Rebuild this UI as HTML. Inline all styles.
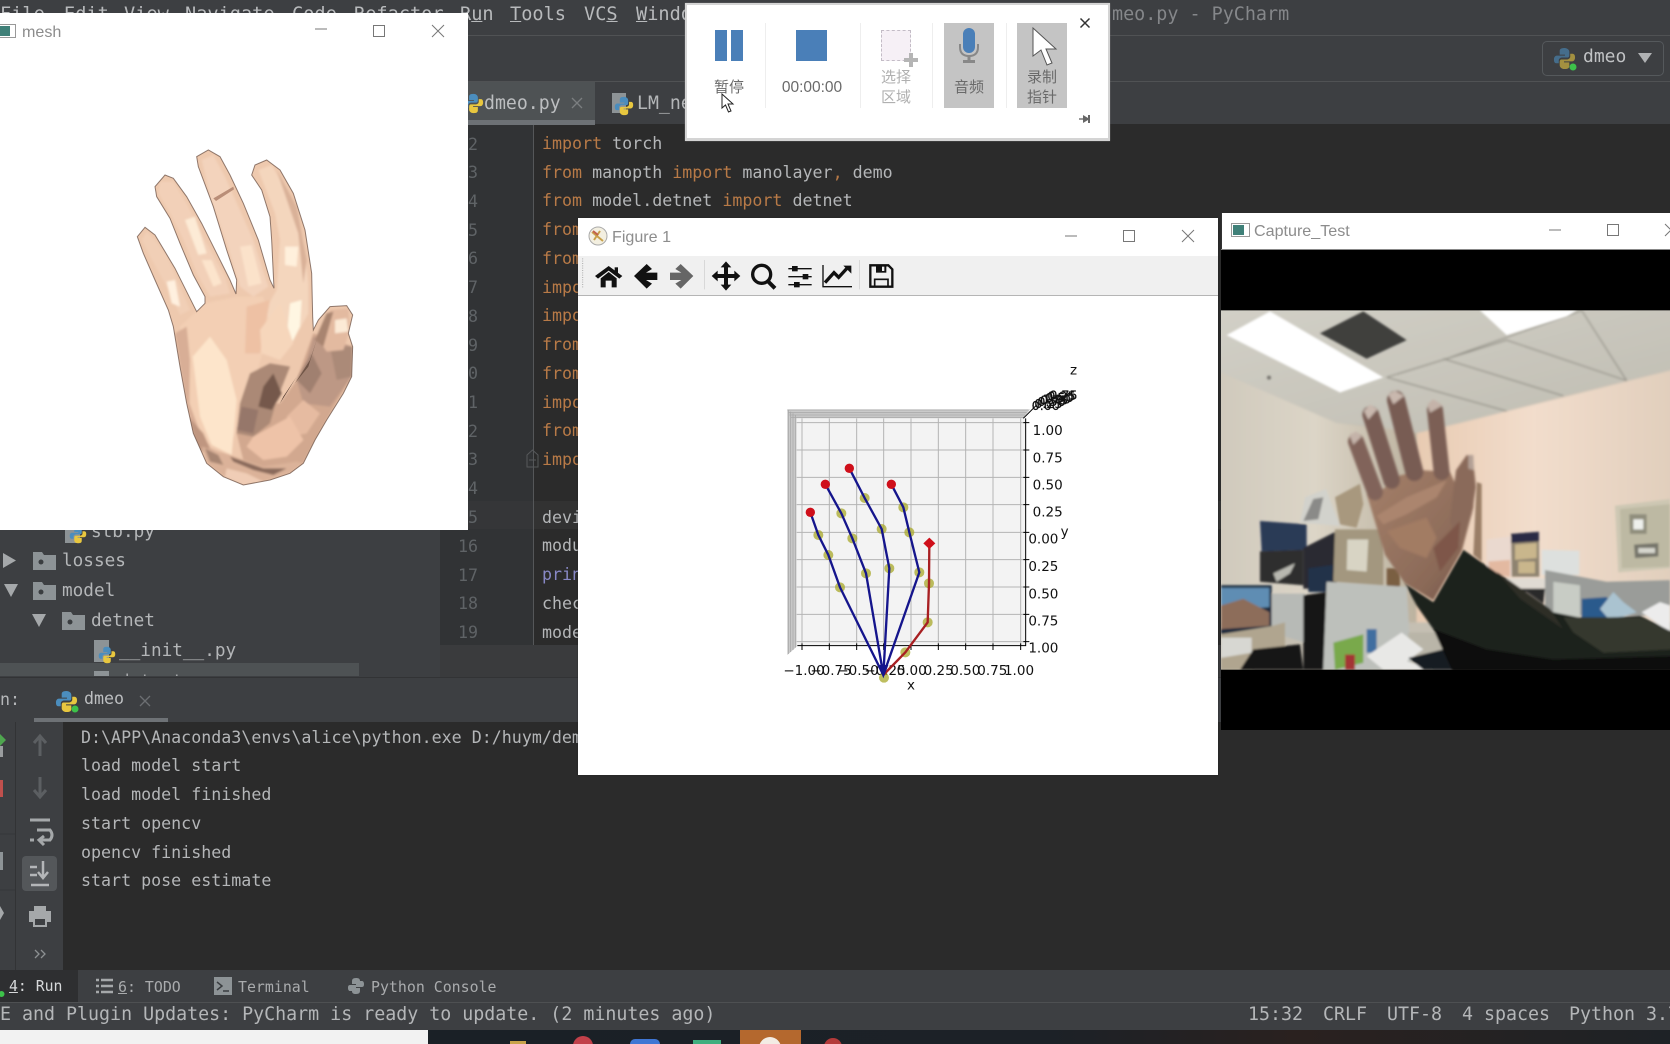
<!DOCTYPE html>
<html>
<head>
<meta charset="utf-8">
<title>dmeo.py - PyCharm</title>
<style>
html,body{margin:0;padding:0}
html{background:#3d3f42}
body{width:1670px;height:1044px;position:relative;overflow:hidden;background:#3d3f42;font-family:"DejaVu Sans Mono","Liberation Mono",monospace;filter:blur(.3px)}
.a{position:absolute}
.t{position:absolute;white-space:pre;font-family:"DejaVu Sans Mono","Liberation Mono",monospace;line-height:20px;font-size:16.65px;color:#b4b6b8;margin-top:1px}
.k{color:#b87a47}
.u{text-decoration:underline}
.w{position:absolute;background:#fff;overflow:hidden}
.wt{position:absolute;white-space:pre;font-family:"Liberation Sans","DejaVu Sans",sans-serif;font-size:16.1px;line-height:20px;color:#8c8c8c;margin-top:1px}
.cn{position:absolute;white-space:pre;font-family:"Liberation Sans","Noto Sans CJK SC",sans-serif;font-size:15px;line-height:20px;text-align:center;color:#6a6a6a;margin-top:1px}
.m{font-size:18.6px;color:#b8babc;top:4px}
.s{font-size:18.3px;top:1004px;color:#b4b6b8}
.n{left:468px;color:#5f6366}
svg{position:absolute;overflow:visible}
</style>
</head>
<body>
<svg width="0" height="0" style="position:absolute">
<defs>
<symbol id="py" viewBox="0 0 24 24">
<path fill="#4b8dbd" d="M12 1C7 1 7 3 7 5V8H12.500V9H4C2 9 1 11 1 13C1 16 2 17 4 17H6V14C6 12 8 11 10 11H15C16.500 11 17 10 17 8V5C17 3 15 1 12 1Z"/>
<path fill="#e8c73f" d="M12 23C17 23 17 21 17 19V16H11.500V15H20C22 15 23 13 23 11C23 8 22 7 20 7H18V10C18 12 16 13 14 13H9C7.500 13 7 14 7 16V19C7 21 9 23 12 23Z"/>
</symbol>
<filter id="b1" x="-5%" y="-5%" width="110%" height="110%"><feGaussianBlur stdDeviation="3.5"/></filter>
<filter id="b0" x="-5%" y="-5%" width="110%" height="110%"><feGaussianBlur stdDeviation=".8"/></filter>
<filter id="b2" x="-5%" y="-5%" width="110%" height="110%"><feGaussianBlur stdDeviation="4"/></filter>
<filter id="b3" x="-5%" y="-5%" width="110%" height="110%"><feGaussianBlur stdDeviation="3"/></filter>
</defs>
</svg>

<!-- title / menu -->
<div class="a" style="left:0;top:35px;width:1670px;height:1px;background:#505254"></div>
<div class="a" style="left:0;top:81px;width:1670px;height:1px;background:#505254"></div>
<div class="t m" style="left:0">File</div>
<div class="t m" style="left:64px">Edit</div>
<div class="t m" style="left:124px">View</div>
<div class="t m" style="left:185px">Navigate</div>
<div class="t m" style="left:292px">Code</div>
<div class="t m" style="left:354px">Refactor</div>
<div class="t m" style="left:460px">R<span class="u">u</span>n</div>
<div class="t m" style="left:510px"><span class="u">T</span>ools</div>
<div class="t m" style="left:584px">VC<span class="u">S</span></div>
<div class="t m" style="left:636px"><span class="u">W</span>indow</div>
<div class="t" style="left:1112px;top:4px;font-size:18.4px;color:#85878a">meo.py - PyCharm</div>

<!-- run config -->
<div class="a" style="left:1542px;top:41px;width:120px;height:33px;border:1.5px solid #55595c;border-radius:5px"></div>
<svg style="left:1553px;top:47px" width="23" height="23"><use href="#py" width="23" height="23" opacity=".6"/><circle cx="20" cy="20" r="3.500" fill="#3dc24a"/></svg>
<div class="t" style="left:1583px;top:46px;font-size:18px;color:#c0c2c4">dmeo</div>
<svg style="left:1638px;top:53px" width="14" height="10"><path d="M0 0H14L7 10Z" fill="#b0b2b4"/></svg>

<!-- editor -->
<div class="a" style="left:440px;top:124px;width:94px;height:521px;background:#313335"></div>
<div class="a" style="left:534px;top:124px;width:1136px;height:521px;background:#2b2b2b"></div>
<div class="a" style="left:533px;top:124px;width:1px;height:521px;background:#555759"></div>
<div class="a" style="left:440px;top:645px;width:1230px;height:33px;background:#3a3b3d"></div>
<div class="a" style="left:534px;top:501px;width:1136px;height:28px;background:#323232"></div>
<div class="a" style="left:440px;top:501px;width:93px;height:28px;background:#353638"></div>

<!-- tabs -->
<div class="a" style="left:440px;top:82px;width:155px;height:43px;background:#4e5254"></div>
<div class="a" style="left:440px;top:120px;width:155px;height:5px;background:#6d7175"></div>
<svg style="left:463px;top:93px" width="21" height="21"><use href="#py" width="21" height="21"/></svg>
<div class="t" style="left:484px;top:93px;font-size:18.2px;color:#bcbec0">dmeo.py</div>
<svg style="left:571px;top:97px" width="12" height="12"><path d="M1 1L11 11M11 1L1 11" stroke="#7b7e80" stroke-width="1.300"/></svg>
<div class="a" style="left:612px;top:93px;width:14px;height:20px;background:#8d9396"></div>
<svg style="left:614px;top:96px" width="20" height="20"><use href="#py" width="20" height="20"/></svg>
<div class="t" style="left:637px;top:93px;font-size:18.2px;color:#b4b6b8">LM_net.py</div>

<!-- line numbers -->
<div class="t n" style="top:134px">2</div>
<div class="t n" style="top:162px">3</div>
<div class="t n" style="top:191px">4</div>
<div class="t n" style="top:220px">5</div>
<div class="t n" style="top:248px">6</div>
<div class="t n" style="top:277px">7</div>
<div class="t n" style="top:306px">8</div>
<div class="t n" style="top:335px">9</div>
<div class="t n" style="top:363px">0</div>
<div class="t n" style="top:392px">1</div>
<div class="t n" style="top:421px">2</div>
<div class="t n" style="top:449px">3</div>
<div class="t n" style="top:478px">4</div>
<div class="t n" style="top:507px">5</div>
<div class="t n" style="left:458px;top:536px">16</div>
<div class="t n" style="left:458px;top:565px">17</div>
<div class="t n" style="left:458px;top:593px">18</div>
<div class="t n" style="left:458px;top:622px">19</div>
<svg style="left:525px;top:449px" width="15" height="20"><path d="M2 6L7.500 1L13 6V18H2Z" fill="none" stroke="#56585a"/><path d="M4 11H11" stroke="#56585a"/></svg>

<!-- code -->
<div class="t" style="left:542px;top:133px"><span class="k">import</span> torch</div>
<div class="t" style="left:542px;top:162px"><span class="k">from</span> manopth <span class="k">import</span> manolayer<span class="k">,</span> demo</div>
<div class="t" style="left:542px;top:190px"><span class="k">from</span> model.detnet <span class="k">import</span> detnet</div>
<div class="t" style="left:542px;top:219px"><span class="k">from</span></div>
<div class="t" style="left:542px;top:248px"><span class="k">from</span></div>
<div class="t" style="left:542px;top:277px"><span class="k">import</span></div>
<div class="t" style="left:542px;top:305px"><span class="k">import</span></div>
<div class="t" style="left:542px;top:334px"><span class="k">from</span></div>
<div class="t" style="left:542px;top:363px"><span class="k">from</span></div>
<div class="t" style="left:542px;top:392px"><span class="k">import</span></div>
<div class="t" style="left:542px;top:420px"><span class="k">from</span></div>
<div class="t" style="left:542px;top:449px"><span class="k">import</span></div>
<div class="t" style="left:542px;top:507px">device</div>
<div class="t" style="left:542px;top:535px">module</div>
<div class="t" style="left:542px;top:564px;color:#8888c6">print</div>
<div class="t" style="left:542px;top:593px">checkpoint</div>
<div class="t" style="left:542px;top:622px">model</div>

<!-- project tree -->
<div class="a" style="left:0;top:663px;width:359px;height:13px;background:#4e5254"></div>
<svg style="left:65px;top:520px" width="23" height="25"><rect x="0" y="2" width="15" height="21" fill="#8d9396"/><use href="#py" x="4" y="6" width="18" height="18"/></svg>
<div class="t" style="left:91px;top:521px;font-size:17.7px;color:#b4b6b8">stb.py</div>
<svg style="left:3px;top:553px" width="13" height="15"><path d="M0 0L13 7.500L0 15Z" fill="#a5a8aa"/></svg>
<svg style="left:33px;top:552px" width="23" height="18"><path d="M0 0H9L11 3H23V18H0Z" fill="#8d9396"/><circle cx="8" cy="10" r="2.500" fill="#3a3d40"/></svg>
<div class="t" style="left:62px;top:550px;font-size:17.7px;color:#b4b6b8">losses</div>
<svg style="left:4px;top:584px" width="14" height="13"><path d="M0 0H14L7 13Z" fill="#a5a8aa"/></svg>
<svg style="left:33px;top:582px" width="23" height="18"><path d="M0 0H9L11 3H23V18H0Z" fill="#8d9396"/><circle cx="8" cy="10" r="2.500" fill="#3a3d40"/></svg>
<div class="t" style="left:62px;top:580px;font-size:17.7px;color:#b4b6b8">model</div>
<svg style="left:32px;top:614px" width="14" height="13"><path d="M0 0H14L7 13Z" fill="#a5a8aa"/></svg>
<svg style="left:62px;top:612px" width="23" height="18"><path d="M0 0H9L11 3H23V18H0Z" fill="#8d9396"/><circle cx="8" cy="10" r="2.500" fill="#3a3d40"/></svg>
<div class="t" style="left:91px;top:610px;font-size:17.7px;color:#b4b6b8">detnet</div>
<svg style="left:94px;top:640px" width="23" height="25"><rect x="0" y="0" width="15" height="22" fill="#8d9396"/><use href="#py" x="4" y="6" width="18" height="18"/></svg>
<div class="t" style="left:119px;top:640px;font-size:17.7px;color:#b4b6b8">__init__.py</div>
<div class="a" style="left:0;top:664px;width:440px;height:12px;overflow:hidden">
<div class="a" style="left:94px;top:7px;width:15px;height:12px;background:#8d9396"></div>
<div class="t" style="left:119px;top:7px;font-size:17.7px;color:#a5a7a9">detnet.py</div>
</div>

<!-- run tool window -->
<div class="a" style="left:0;top:677px;width:1670px;height:1px;background:#323335"></div>
<div class="a" style="left:34px;top:718px;width:134px;height:4px;background:#6e7276"></div>
<div class="t" style="left:0;top:689px">n:</div>
<svg style="left:55px;top:690px" width="24" height="23"><use href="#py" width="23" height="23"/><circle cx="20" cy="19" r="3.500" fill="#3dc24a"/></svg>
<div class="t" style="left:84px;top:688px;color:#bcbec0">dmeo</div>
<svg style="left:139px;top:695px" width="12" height="12"><path d="M1 1L11 11M11 1L1 11" stroke="#6c6f72" stroke-width="1.300"/></svg>

<div class="a" style="left:63px;top:722px;width:1607px;height:248px;background:#2b2b2b"></div>
<div class="a" style="left:15px;top:722px;width:1px;height:248px;background:#323335"></div>
<div class="t" style="left:81px;top:727px">D:\APP\Anaconda3\envs\alice\python.exe D:/huym/demo/dmeo.py</div>
<div class="t" style="left:81px;top:755px">load model start</div>
<div class="t" style="left:81px;top:784px">load model finished</div>
<div class="t" style="left:81px;top:813px">start opencv</div>
<div class="t" style="left:81px;top:842px">opencv finished</div>
<div class="t" style="left:81px;top:870px">start pose estimate</div>

<!-- run side icons -->
<svg style="left:0;top:722px" width="63" height="248">
<path d="M0 12L6 18L0 24Z" fill="#4fa64f"/><rect x="0" y="24" width="3" height="11" fill="#9a9d9f"/>
<rect x="0" y="58" width="3" height="17" fill="#c0504d"/>
<path d="M0 112H15M0 168H15" stroke="#35373a"/>
<rect x="0" y="130" width="3" height="18" fill="#8d9396"/>
<path d="M0 184L4 191L0 198Z" fill="#a5a8aa"/>
<path d="M40 15V34M34 21L40 14L46 21" fill="none" stroke="#5c5f62" stroke-width="3"/>
<path d="M40 55V74M34 68L40 75L46 68" fill="none" stroke="#5c5f62" stroke-width="3"/>
<path d="M30 98H50M37 108H50Q54 113 50 118H40M44 114L39 118L44 123M30 118H34" fill="none" stroke="#a5a8aa" stroke-width="3"/>
<rect x="22" y="134" width="35" height="35" rx="4" fill="#54575a"/>
<path d="M30 145H37M30 153H37M31 163H49M43 139V154M38 150L43 156L48 150" fill="none" stroke="#b4b6b8" stroke-width="2.500"/>
<path d="M34 189V184H46V189M29 189H51V200H46V195H34V200H29Z" fill="#a5a8aa"/><rect x="34" y="196" width="12" height="8" fill="none" stroke="#a5a8aa" stroke-width="2"/>
<path d="M35 228L39 232L35 236M41 228L45 232L41 236" fill="none" stroke="#8d9092" stroke-width="1.300"/>
</svg>

<!-- bottom tabs -->
<div class="a" style="left:0;top:970px;width:1670px;height:32px;background:#3d3f42"></div>
<div class="a" style="left:0;top:970px;width:78px;height:32px;background:#2e2f31"></div>
<svg style="left:0;top:990px" width="8" height="8"><circle cx="1.500" cy="4" r="3" fill="#3dc24a"/></svg>
<div class="t" style="left:9px;top:976px;font-size:14.8px;color:#d6d8da"><span class="u">4</span>: Run</div>
<svg style="left:96px;top:978px" width="17" height="16"><path d="M0 2H3M5 2H17M0 8H3M5 8H17M0 14H3M5 14H17" stroke="#a5a8aa" stroke-width="2.500"/></svg>
<div class="t" style="left:118px;top:976px;font-size:14.9px;color:#a9abad"><span class="u">6</span>: TODO</div>
<svg style="left:214px;top:977px" width="18" height="18"><rect width="18" height="18" fill="#8d9396"/><path d="M3 5L8 9L3 13M9 14H15" fill="none" stroke="#3a3d40" stroke-width="1.500"/></svg>
<div class="t" style="left:238px;top:976px;font-size:14.9px;color:#a9abad">Terminal</div>
<svg style="left:347px;top:977px" width="18" height="18"><path d="M9 1C5 1 5 3 5 5V7H9V8H3C1 8 1 10 1 11C1 13 2 14 3 14H5C5 11 7 10 9 10H12C13 10 13 9 13 7V4C13 2 12 1 9 1Z" fill="#8d9396"/><path d="M9 17C13 17 13 15 13 13V11H9V10H15C17 10 17 8 17 7C17 5 16 4 15 4H13C13 7 11 8 9 8H6C5 8 5 9 5 11V14C5 16 6 17 9 17Z" fill="#8d9396"/></svg>
<div class="t" style="left:371px;top:976px;font-size:14.9px;color:#a9abad">Python Console</div>

<!-- status bar -->
<div class="a" style="left:0;top:1002px;width:1670px;height:28px;background:#3d3f42;border-top:1px solid #4e5052;box-sizing:border-box"></div>
<div class="t s" style="left:0">E and Plugin Updates: PyCharm is ready to update. (2 minutes ago)</div>
<div class="t s" style="left:1248px">15:32</div>
<div class="t s" style="left:1323px">CRLF</div>
<div class="t s" style="left:1387px">UTF-8</div>
<div class="t s" style="left:1462px">4 spaces</div>
<div class="t s" style="left:1569px">Python 3.7</div>

<!-- taskbar -->
<div class="a" style="left:0;top:1030px;width:428px;height:14px;background:#f2f2f2"></div>
<div class="a" style="left:428px;top:1030px;width:1242px;height:14px;background:linear-gradient(90deg,#1a2026,#1c2127 50%,#2a211f 70%,#1e2226)"></div>
<div class="a" style="left:740px;top:1030px;width:61px;height:14px;background:#b4682e"></div>
<svg style="left:428px;top:1030px;overflow:hidden" width="500" height="14">
<rect x="82" y="11" width="16" height="3" fill="#c9a34a"/>
<circle cx="155" cy="16" r="10" fill="#c2404a"/>
<rect x="202" y="9" width="30" height="12" rx="5" fill="#3f76d4"/>
<rect x="265" y="10" width="28" height="6" fill="#3fae7e"/>
<circle cx="342" cy="18" r="11" fill="#f3ece4"/>
<circle cx="405" cy="17" r="9" fill="#b33a3a"/>
</svg>

<!-- mesh window -->
<div class="w" style="left:0;top:13px;width:468px;height:517px">
<svg style="left:-3px;top:11px" width="19" height="14"><rect x=".5" y=".5" width="18" height="13" fill="#fff" stroke="#999"/><rect x="2" y="2" width="11" height="10" fill="#3f8078"/></svg>
<div class="wt" style="left:22px;top:8px">mesh</div>
<svg style="left:0;top:0" width="468" height="40"><path d="M315 16H327" stroke="#777"/><rect x="373.500" y="12.500" width="11" height="11" fill="none" stroke="#777"/><path d="M432 12L444 24M444 12L432 24" stroke="#777"/></svg>
<svg style="left:130px;top:127px" width="240" height="360" viewBox="0 0 720 1080">
<defs><clipPath id="hc"><path d="M45 262L75 285L105 335L135 385L165 445L200 515L225 490L225 470L190 405L150 310L120 235L80 170L75 140L105 105L130 115L170 170L215 250L260 340L300 420L318 462L320 420L290 330L250 200L205 80L200 50L235 30L270 50L300 105L340 190L385 300L420 420L432 445L425 300L420 230L395 150L365 105L375 75L410 60L450 90L490 160L525 270L545 400L548 530L550 570L565 540L600 500L650 497L668 525L655 580L668 620L665 710L640 760L590 840L555 900L520 970L480 1000L420 1020L340 1035L280 1010L230 970L190 880L170 790L150 680L130 560L115 510L75 420L40 340L22 290Z"/></clipPath></defs>
<g clip-path="url(#hc)">
<rect width="720" height="1080" fill="#eec9ae"/>
<g filter="url(#b1)">
<path d="M50 275L75 300L110 345L150 440L180 510L150 525L110 440L60 350L35 300Z" fill="#f1cfb6"/>
<path d="M110 425L135 420L150 500L125 490Z" fill="#fff0df"/>
<path d="M90 125L130 125L170 190L225 300L285 410L300 460L240 470L200 400L160 300L120 220L85 160Z" fill="#f2d0b8"/>
<path d="M165 240L195 230L230 340L205 345Z" fill="#fdebd6"/>
<path d="M215 360L245 360L275 430L250 440Z" fill="#fce4cc"/>
<path d="M215 60L250 45L285 110L370 300L415 440L370 470L330 440L290 310L240 170Z" fill="#f3d3bc"/>
<path d="M330 320L365 315L395 430L355 440Z" fill="#fbe2ca"/>
<path d="M385 90L425 75L480 170L520 300L535 430L535 520L480 620L430 620L400 520L440 450L450 300L435 220Z" fill="#f4d6bd"/>
<path d="M465 320L505 320L500 380L465 375Z" fill="#fff0dc"/>
<path d="M480 490L515 480L510 560L480 620L470 590Z" fill="#fff6e2"/>
<path d="M440 90L500 200L530 360L520 430L505 280Z" fill="#d9b198"/>
<path d="M150 560L225 490L320 470L400 470L420 560L380 700L320 870L290 940L220 900L175 780Z" fill="#f3cfb4"/>
<path d="M188 650L240 590L290 660L320 780L305 945L245 915L210 830Z" fill="#fde5cb"/>
<path d="M350 500L420 480L390 640L345 640Z" fill="#eec1a4"/>
<path d="M390 570L450 490L490 610L450 660L395 640Z" fill="#f6d6bb"/>
<path d="M135 580L170 560L180 660L178 790L215 890L190 880L165 770Z" fill="#d8ae96"/>
<path d="M175 830L220 880L240 925L300 950L240 955L200 920Z" fill="#bf9680"/>
<path d="M330 790L450 790L500 720L550 580L668 620L665 710L590 840L520 970L420 1000L340 960L320 880Z" fill="#d2a88f"/>
<path d="M360 700L420 670L480 680L440 780L420 850L370 890L320 880L330 790Z" fill="#ab8976"/>
<path d="M400 740L430 700L455 760L425 810L385 800Z" fill="#75594b"/>
<path d="M335 800L385 810L370 880L320 870Z" fill="#96776a"/>
<path d="M550 590L668 620L665 710L600 800L520 790L500 720L530 660Z" fill="#bd9885"/>
<path d="M470 830L520 780L570 820L530 880L480 890Z" fill="#e6bba1"/>
<path d="M500 720L545 640L575 700L540 760Z" fill="#a08070"/>
<path d="M600 620L668 620L665 710L620 720Z" fill="#ab8a78"/>
<path d="M370 890L480 830L520 900L470 950L400 960L350 920Z" fill="#eec3a8"/>
<path d="M560 590L600 510L655 505L660 570L640 630L590 635Z" fill="#e3baa0"/>
<path d="M615 540L650 535L655 575L615 580Z" fill="#fcead6"/>
<path d="M555 600L590 520L610 515L580 620Z" fill="#a8846f"/>
<path d="M215 920L300 945L400 980L500 965L520 970L480 1000L420 1020L340 1035L280 1010L230 970Z" fill="#dbb299"/>
<path d="M225 925L265 945L280 975L240 965Z" fill="#a78572"/>
<path d="M300 950L400 985L470 985L430 1005L370 990L310 965Z" fill="#8a6b5b"/>
<path d="M290 985L350 1000L400 1025L340 1035L285 1010Z" fill="#f0cdb6"/>
</g>
<g filter="url(#b0)">
<path d="M250 175L310 140L312 148L258 183Z" fill="#b98e78"/>
<path d="M460 770L520 680L540 650L500 710L450 790Z" fill="#4b352c"/>
<path d="M495 730L540 660L560 600L535 680Z" fill="#6f5546"/>
</g>
</g>
<path filter="url(#b0)" d="M45 262L75 285L105 335L135 385L165 445L200 515L225 490L225 470L190 405L150 310L120 235L80 170L75 140L105 105L130 115L170 170L215 250L260 340L300 420L318 462L320 420L290 330L250 200L205 80L200 50L235 30L270 50L300 105L340 190L385 300L420 420L432 445L425 300L420 230L395 150L365 105L375 75L410 60L450 90L490 160L525 270L545 400L548 530L550 570L565 540L600 500L650 497L668 525L655 580L668 620L665 710L640 760L590 840L555 900L520 970L480 1000L420 1020L340 1035L280 1010L230 970L190 880L170 790L150 680L130 560L115 510L75 420L40 340L22 290Z" fill="none" stroke="#6d5346" stroke-width="3" stroke-opacity=".75"/>
</svg>
</div>

<!-- recorder panel -->
<div class="a" style="left:685px;top:3px;width:421px;height:133px;background:#fff;border:2px solid #d4d4d4;border-bottom-width:3px;box-shadow:0 0 1px #888"></div>
<div class="a" style="left:765px;top:23px;width:1px;height:85px;background:#eee"></div>
<div class="a" style="left:860px;top:23px;width:1px;height:85px;background:#eee"></div>
<div class="a" style="left:932px;top:23px;width:1px;height:85px;background:#eee"></div>
<div class="a" style="left:1006px;top:23px;width:1px;height:85px;background:#eee"></div>
<div class="a" style="left:715px;top:30px;width:12px;height:31px;background:#4a7fb8"></div>
<div class="a" style="left:731px;top:30px;width:12px;height:31px;background:#4a7fb8"></div>
<div class="a" style="left:796px;top:30px;width:31px;height:31px;background:#4a7fb8"></div>
<div class="cn" style="left:699px;top:77px;width:60px">暂停</div>
<div class="cn" style="left:772px;top:77px;width:80px;font-size:15.5px">00:00:00</div>
<div class="a" style="left:881px;top:30px;width:30px;height:31px;background:#f6f0f6;border:1px dashed #c3bcc6;box-sizing:border-box"></div>
<svg style="left:904px;top:53px" width="14" height="14"><path d="M5 0H9V5H14V9H9V14H5V9H0V5H5Z" fill="#b5b5b5"/></svg>
<div class="cn" style="left:866px;top:67px;width:60px;color:#b0b0b0">选择</div>
<div class="cn" style="left:866px;top:87px;width:60px;color:#b0b0b0">区域</div>
<div class="a" style="left:944px;top:23px;width:50px;height:85px;background:#c4c4c4"></div>
<svg style="left:957px;top:26px" width="24" height="38"><rect x="6" y="2" width="12" height="25" rx="6" fill="#4a7fb8"/><path d="M3 18V21C3 28 7 30 12 30C17 30 21 28 21 21V18" fill="none" stroke="#888" stroke-width="2"/><rect x="10.500" y="30" width="3" height="5" fill="#888"/><rect x="6" y="34" width="12" height="3" fill="#888"/></svg>
<div class="cn" style="left:939px;top:77px;width:60px">音频</div>
<div class="a" style="left:1017px;top:23px;width:50px;height:85px;background:#c4c4c4"></div>
<svg style="left:1030px;top:26px" width="30" height="42"><path d="M3 2L3 30L11 24L17 39L22 37L16 23L26 23Z" fill="#fff" stroke="#555" stroke-width="1"/></svg>
<div class="cn" style="left:1012px;top:67px;width:60px">录制</div>
<div class="cn" style="left:1012px;top:87px;width:60px">指针</div>
<svg style="left:1079px;top:17px" width="12" height="12"><path d="M1.500 1.500L10.500 10.500M10.500 1.500L1.500 10.500" stroke="#333" stroke-width="1.500"/></svg>
<svg style="left:1079px;top:113px" width="12" height="12"><path d="M0 6H5" stroke="#777" stroke-width="1.500"/><path d="M4 2L9 5V7L4 10Z" fill="#666"/><rect x="9" y="2" width="2" height="8" fill="#666"/></svg>
<svg style="left:721px;top:93px" width="15" height="21"><path d="M1 1V15L4.500 12L7.500 19L10 18L7 11L12 11Z" fill="#fff" stroke="#222" stroke-width="1"/></svg>

<!-- figure window -->
<div class="w" style="left:578px;top:218px;width:640px;height:557px;box-shadow:0 0 1px #222">
<svg style="left:10px;top:8px" width="20" height="20"><circle cx="10" cy="10" r="9" fill="#f3efe0" stroke="#aaa"/><path d="M4 6L15 15M6 14L12 5" stroke="#c8a14a" stroke-width="2"/><path d="M5 5L10 9" stroke="#c2604a" stroke-width="2"/></svg>
<div class="wt" style="left:34px;top:8px;color:#8d8d8d">Figure 1</div>
<svg style="left:0;top:0" width="640" height="40"><path d="M487 18H499" stroke="#777"/><rect x="545.500" y="12.500" width="11" height="11" fill="none" stroke="#777"/><path d="M604 12L616 24M616 12L604 24" stroke="#777"/></svg>
<div class="a" style="left:0;top:38px;width:640px;height:39px;background:#f0f0f0;border-bottom:1px solid #b5b5b5"></div>
<svg style="left:2px;top:2px" width="320" height="80" viewBox="0 0 960 240">
<path d="M8 115V205" stroke="#aaa" stroke-width="3" stroke-dasharray="3 4"/>
<path d="M45 168L86 138L127 168L118 176L86 152L54 176Z" fill="#111"/><rect x="104" y="142" width="10" height="18" fill="#111"/><path d="M62 175L86 156L110 175V202H95V182H77V202H62Z" fill="#111"/>
<path d="M162 168L200 132L216 147L198 158H232V180H198L216 191L200 206Z" fill="#111"/>
<path d="M340 168L302 132L286 147L304 158H270V180H304L286 191L302 206Z" fill="#666"/>
<path d="M373 120V208" stroke="#ccc" stroke-width="2"/>
<path d="M438 124L454 142H444V162H463V152L481 168L463 184V174H444V194H454L438 212L422 194H432V174H413V184L395 168L413 152V162H432V142H422Z" fill="#111"/>
<circle cx="545" cy="163" r="27" fill="none" stroke="#111" stroke-width="10"/><path d="M563 183L585 205" stroke="#111" stroke-width="12"/>
<path d="M625 146H695M625 170H695M625 194H695" stroke="#111" stroke-width="4"/><rect x="636" y="138" width="17" height="16" fill="#111"/><rect x="668" y="162" width="17" height="16" fill="#111"/><rect x="642" y="186" width="17" height="16" fill="#111"/>
<path d="M729 135V200H816" fill="none" stroke="#111" stroke-width="4"/><path d="M735 188L762 158L776 172L800 146" fill="none" stroke="#111" stroke-width="10"/><path d="M790 137H814V161Z" fill="#111"/>
<path d="M838 120V208" stroke="#ccc" stroke-width="2"/>
<path d="M871 136H925L937 148V200H871Z" fill="none" stroke="#111" stroke-width="7"/><rect x="888" y="136" width="31" height="22" fill="#111"/><rect x="906" y="140" width="7" height="13" fill="#f0f0f0"/><rect x="884" y="178" width="40" height="22" fill="none" stroke="#111" stroke-width="5"/>
</svg>
</div>

<!-- plot -->
<svg style="left:760px;top:350px" width="330" height="350" viewBox="0 0 990 1050">
<path d="M82 178H810L790 205H110V890L82 915Z" fill="#cacaca"/>
<path d="M82 180H805M85 188H800M88 195H795M92 202H792M85 180V912M92 185V906M99 190V900M106 195V893" stroke="#a8a8a8" stroke-width="2.500" fill="none"/>
<rect x="110" y="205" width="687" height="682" fill="#f3f3f3"/>
<path d="M126 205V887M208 205V887M290 205V887M371 205V887M453 205V887M535 205V887M617 205V887M699 205V887M782 205V887M110 218H797M110 300H797M110 382H797M110 464H797M110 547H797M110 629H797M110 711H797M110 793H797M110 875H797" stroke="#b4b4b4" stroke-width="3"/>
<path d="M112 887H797V205M790 205L830 165" fill="none" stroke="#000" stroke-width="3"/>
<path d="M126 880V900M208 880V900M290 880V900M371 880V900M453 880V900M535 880V900M617 880V900M699 880V900M782 880V900M790 218H808M790 300H808M790 382H808M790 464H808M790 547H808M790 629H808M790 711H808M790 793H808M790 875H808" stroke="#000" stroke-width="3"/>
<g font-family="DejaVu Sans, sans-serif" font-size="40.5" fill="#111">
<text x="818" y="255">1.00</text><text x="818" y="337">0.75</text><text x="818" y="418">0.50</text><text x="818" y="499">0.25</text><text x="805" y="581">0.00</text><text x="805" y="663">0.25</text><text x="805" y="745">0.50</text><text x="805" y="826">0.75</text><text x="805" y="908">1.00</text>
<g text-anchor="middle">
<text x="132" y="975">−1.00</text><text x="213" y="975">−0.75</text><text x="294" y="975">−0.50</text><text x="375" y="975">−0.25</text><text x="455" y="975">0.00</text><text x="536" y="975">0.25</text><text x="616" y="975">0.50</text><text x="697" y="975">0.75</text><text x="777" y="975">1.00</text>
<text x="453" y="1018">x</text></g>
<text x="902" y="558">y</text><text x="930" y="74">z</text>
<g font-size="38" fill="#111" stroke="#111" stroke-width=".6"><text x="815" y="180">0.00</text><text x="823" y="174">0.25</text><text x="832" y="168">0.50</text><text x="840" y="164">0.75</text><text x="848" y="160">1.00</text><text x="856" y="156">0.50</text><text x="862" y="152">0.25</text><text x="868" y="148">0.75</text></g>
</g>
<g fill="#a8a82a" fill-opacity=".75"><circle cx="372" cy="983" r="15"/><circle cx="436" cy="907" r="15"/><circle cx="503" cy="817" r="15"/><circle cx="507" cy="700" r="15"/><circle cx="240" cy="712" r="15"/><circle cx="205" cy="615" r="15"/><circle cx="175" cy="555" r="15"/><circle cx="318" cy="670" r="15"/><circle cx="277" cy="565" r="15"/><circle cx="244" cy="490" r="15"/><circle cx="388" cy="655" r="15"/><circle cx="365" cy="537" r="15"/><circle cx="314" cy="444" r="15"/><circle cx="478" cy="667" r="15"/><circle cx="448" cy="547" r="15"/><circle cx="430" cy="472" r="15"/></g>
<g fill="none" stroke-width="7">
<path stroke="#a81f22" d="M370 975L436 907L503 817L507 700L508 580"/>
<path stroke="#15158c" d="M370 975L240 712L205 615L175 555L151 487M370 975L318 670L277 565L244 490L196 403M370 975L388 655L365 537L314 444L268 355M370 975L478 667L448 547L430 472L394 403"/>
</g>
<path d="M355 945L370 985L385 945Z" fill="#15158c"/>
<g fill="#cf0f1a"><circle cx="151" cy="487" r="14"/><circle cx="196" cy="403" r="14"/><circle cx="268" cy="355" r="14"/><circle cx="394" cy="403" r="14"/><path d="M508 563L526 580L508 597L490 580Z"/></g>
</svg>

<!-- capture window -->
<div class="w" style="left:1221px;top:213px;width:449px;height:36px;border-left:1px solid #333">
<svg style="left:9px;top:10px" width="19" height="14"><rect x=".5" y=".5" width="18" height="13" fill="#fff" stroke="#999"/><rect x="2" y="2" width="11" height="10" fill="#3f8078"/></svg>
<div class="wt" style="left:32px;top:7px">Capture_Test</div>
<svg style="left:0;top:0" width="449" height="35"><path d="M327 17H339" stroke="#777"/><rect x="385.500" y="11.500" width="11" height="11" fill="none" stroke="#777"/><path d="M443 11L455 23M455 11L443 23" stroke="#777"/></svg>
</div>
<div class="a" style="left:1221px;top:249px;width:449px;height:481px;background:#000;border-top:1px solid #888;box-sizing:border-box"></div>

<!-- photo -->
<svg style="left:1220px;top:210px" width="450" height="530" viewBox="0 0 1350 1568" preserveAspectRatio="none">
<defs>
<clipPath id="ph"><rect x="3" y="297" width="1347" height="1063"/></clipPath>
<linearGradient id="lw" x1="0" y1="0" x2="1" y2="0"><stop offset="0" stop-color="#cfc9bc"/><stop offset=".5" stop-color="#dcd5c7"/><stop offset="1" stop-color="#bcb29f"/></linearGradient>
<linearGradient id="rw" x1="0" y1="0" x2="1" y2="0"><stop offset="0" stop-color="#e8cbb2"/><stop offset=".45" stop-color="#f2ddcc"/><stop offset="1" stop-color="#e0cebc"/></linearGradient>
<linearGradient id="cl" x1="0" y1="0" x2="1" y2="1"><stop offset="0" stop-color="#d2d0c7"/><stop offset="1" stop-color="#bfbcb1"/></linearGradient>
<linearGradient id="pm" x1="0" y1="0" x2="1" y2="1"><stop offset="0" stop-color="#a5806a"/><stop offset=".7" stop-color="#8b6a58"/><stop offset="1" stop-color="#6f5145"/></linearGradient>
</defs>
<g clip-path="url(#ph)">
<rect x="3" y="297" width="1347" height="1063" fill="#c5bfb2"/>
<g filter="url(#b2)">
<path d="M-20 470L350 630L590 660L590 1220L-20 1220Z" fill="url(#lw)"/>
<path d="M590 660L720 630L1370 470V1220H590Z" fill="url(#rw)"/>
<path d="M-20 280H1370V470L1030 550L860 595L720 630L590 660L480 640L350 630L-20 470Z" fill="url(#cl)"/>
<path d="M500 495L860 385M680 440L1085 297M860 385L1220 505M500 495L860 595M670 440L1030 550M1085 297L1220 505" stroke="#85837a" stroke-width="3" fill="none"/>
</g>
<g filter="url(#b3)">
<path d="M300 365L430 300L560 385L440 440Z" fill="#3f3f3c"/>
<path d="M20 370L150 300L490 495L360 540Z" fill="#fff"/>
<path d="M780 297H1070L1040 315L860 370Z" fill="#fff"/>
<circle cx="147" cy="496" r="6" fill="#77756f"/>
<path d="M120 920L260 930V1005L125 1010Z" fill="#2b3a57"/>
<path d="M120 1010L250 1005L250 1110L120 1100Z" fill="#2d2f2d"/>
<path d="M160 1075L225 1045L210 1075L170 1100Z" fill="#b8b8b0"/>
<path d="M250 1000L350 950V1120H250Z" fill="#2b2c30"/>
<path d="M265 1060L340 1050L335 1130L265 1130Z" fill="#22304a"/>
<path d="M240 925L255 850L318 825L360 935Z" fill="#d2d2cc"/>
<path d="M250 920L280 855L310 850L295 915Z" fill="#5a5a5a" opacity=".6"/>
<path d="M345 850L420 810L430 870L410 940L360 930Z" fill="#a8987e"/>
<path d="M345 945H490V1110L340 1100Z" fill="#a3977f"/>
<path d="M382 975H445L440 1070L380 1065Z" fill="#d8d4c4"/>
<path d="M500 1060H540V1115H500Z" fill="#7a5f43"/>
<path d="M3 1110H155V1240L3 1255Z" fill="#1c2a3c"/>
<path d="M3 1118H148V1175L3 1185Z" fill="#5f8db3"/>
<path d="M3 1170L70 1150L148 1190V1230L3 1240Z" fill="#8d6d5a"/>
<path d="M155 1135H255V1280L155 1250Z" fill="#b7bab6"/>
<path d="M250 1140L320 1130L310 1360H250Z" fill="#171717"/>
<path d="M320 1100L560 1115L575 1360H310Z" fill="#bdc0bb"/>
<path d="M3 1255L160 1230L195 1220V1290L100 1360H3Z" fill="#b0a58f"/>
<path d="M3 1265H95V1310L3 1325Z" fill="#d7d7d2"/>
<path d="M100 1300L240 1285L250 1360H60Z" fill="#141313"/>
<path d="M340 1280L430 1255V1340L345 1360Z" fill="#79a94c"/>
<path d="M440 1240H470V1310H440Z" fill="#3f6ea0"/>
<path d="M375 1315H405V1360H375Z" fill="#a33535"/>
<path d="M565 1250H680V1320H565Z" fill="#b9b5a8"/>
<path d="M770 805L785 810V1040L760 1020Z" fill="#9a7e66"/>
<path d="M800 975L875 965V1085L800 1060Z" fill="#ead9cf"/>
<path d="M805 1040L870 1035V1085L810 1075Z" fill="#e3b9a1"/>
<path d="M873 958L957 952L958 1085L875 1085Z" fill="#8e8370"/>
<path d="M873 958L957 952V980L873 985Z" fill="#2a2c45"/>
<path d="M885 990L950 985V1030L885 1035ZM895 1040H945V1075H895Z" fill="#c9b68c"/>
<path d="M965 1005L1078 1008V1080L965 1080Z" fill="#dde0de"/>
<path d="M1185 875L1350 855V1060L1195 1072Z" fill="#cdc7b3"/>
<path d="M1200 885L1350 870V1055L1205 1060Z" fill="#bdb9a3"/>
<path d="M1228 900H1280V958H1230Z" fill="#8f8d7c"/>
<path d="M1240 915H1270V945H1240Z" fill="#eef0ec"/>
<path d="M1242 990L1315 985V1025L1245 1030Z" fill="#76756a"/>
<path d="M1255 1000H1305V1015H1255Z" fill="#d6d6cd"/>
<path d="M850 1090L975 1090V1120L880 1120Z" fill="#e0dbd3"/>
<path d="M880 1120H975L970 1165L920 1130Z" fill="#2a2a2c"/>
<path d="M975 1065L1160 1100L1350 1095V1200H975Z" fill="#9a9c99"/>
<path d="M1000 1100L1080 1110V1210H1000Z" fill="#c8ccc5"/>
<path d="M1085 1150L1160 1145L1210 1200L1085 1215Z" fill="#2a5a8c"/>
<path d="M1140 1180L1180 1130L1210 1160L1250 1190L1170 1215Z" fill="#aac3d0"/>
<path d="M1265 1190L1320 1160L1350 1170V1250Z" fill="#ececec"/>
<path d="M440 1320L545 1250L610 1300L560 1335L640 1360H490Z" fill="#e8e8e6"/>
<path d="M565 1325L690 1295L790 1360H610Z" fill="#191c24"/>
<path d="M555 1105L640 1160L730 1005L840 1080L1000 1190L1100 1210L1260 1200L1360 1250V1370H720L640 1240L590 1170Z" fill="#1c211b"/>
<path d="M1030 1205L1260 1205L1360 1250V1300L1150 1310L1060 1250Z" fill="#34392d"/>
<path d="M830 1070L990 1180L1030 1240L900 1150Z" fill="#2d2f27"/>
<path d="M640 1240L700 1370H1360V1320L1000 1330L800 1300Z" fill="#0f110e"/>
</g>
<g filter="url(#b2)">
<path d="M440 840L490 825L540 785L610 770L690 775L708 815L765 800L760 880L725 1010L640 1155L555 1105L495 1020Z" fill="url(#pm)"/>
<g fill="none" stroke-linecap="round">
<path d="M408 685L465 835" stroke="#81645a" stroke-width="48"/>
<path d="M452 605L515 800" stroke="#795d54" stroke-width="50"/>
<path d="M528 562L583 775" stroke="#785c53" stroke-width="54"/>
<path d="M645 592L665 775" stroke="#7c5f55" stroke-width="48"/>
</g>
<path d="M708 770L740 725L758 730L768 820L755 900L720 1000L690 920L700 830Z" fill="#8a6a5a"/>
<path d="M388 665L410 655L425 670L400 695Z" fill="#c4b3a9"/>
<path d="M432 595L450 575L472 590L445 620Z" fill="#c9b8ae"/>
<path d="M505 545L525 535L552 550L520 575Z" fill="#c9b8ae"/>
<path d="M622 575L640 560L668 578L630 600Z" fill="#c4b3a9"/>
<path d="M745 725L760 725L762 770L745 765Z" fill="#b4a196"/>
<path d="M470 905L560 850L680 800L650 850L560 900L490 930Z" fill="#ab856e"/>
<path d="M500 950L620 910L650 970L620 1030L540 1000Z" fill="#a27b64"/>
<path d="M640 1000L720 920L715 1000L660 1070Z" fill="#7e574a"/>
</g>
</g>
</svg>
</body>
</html>
